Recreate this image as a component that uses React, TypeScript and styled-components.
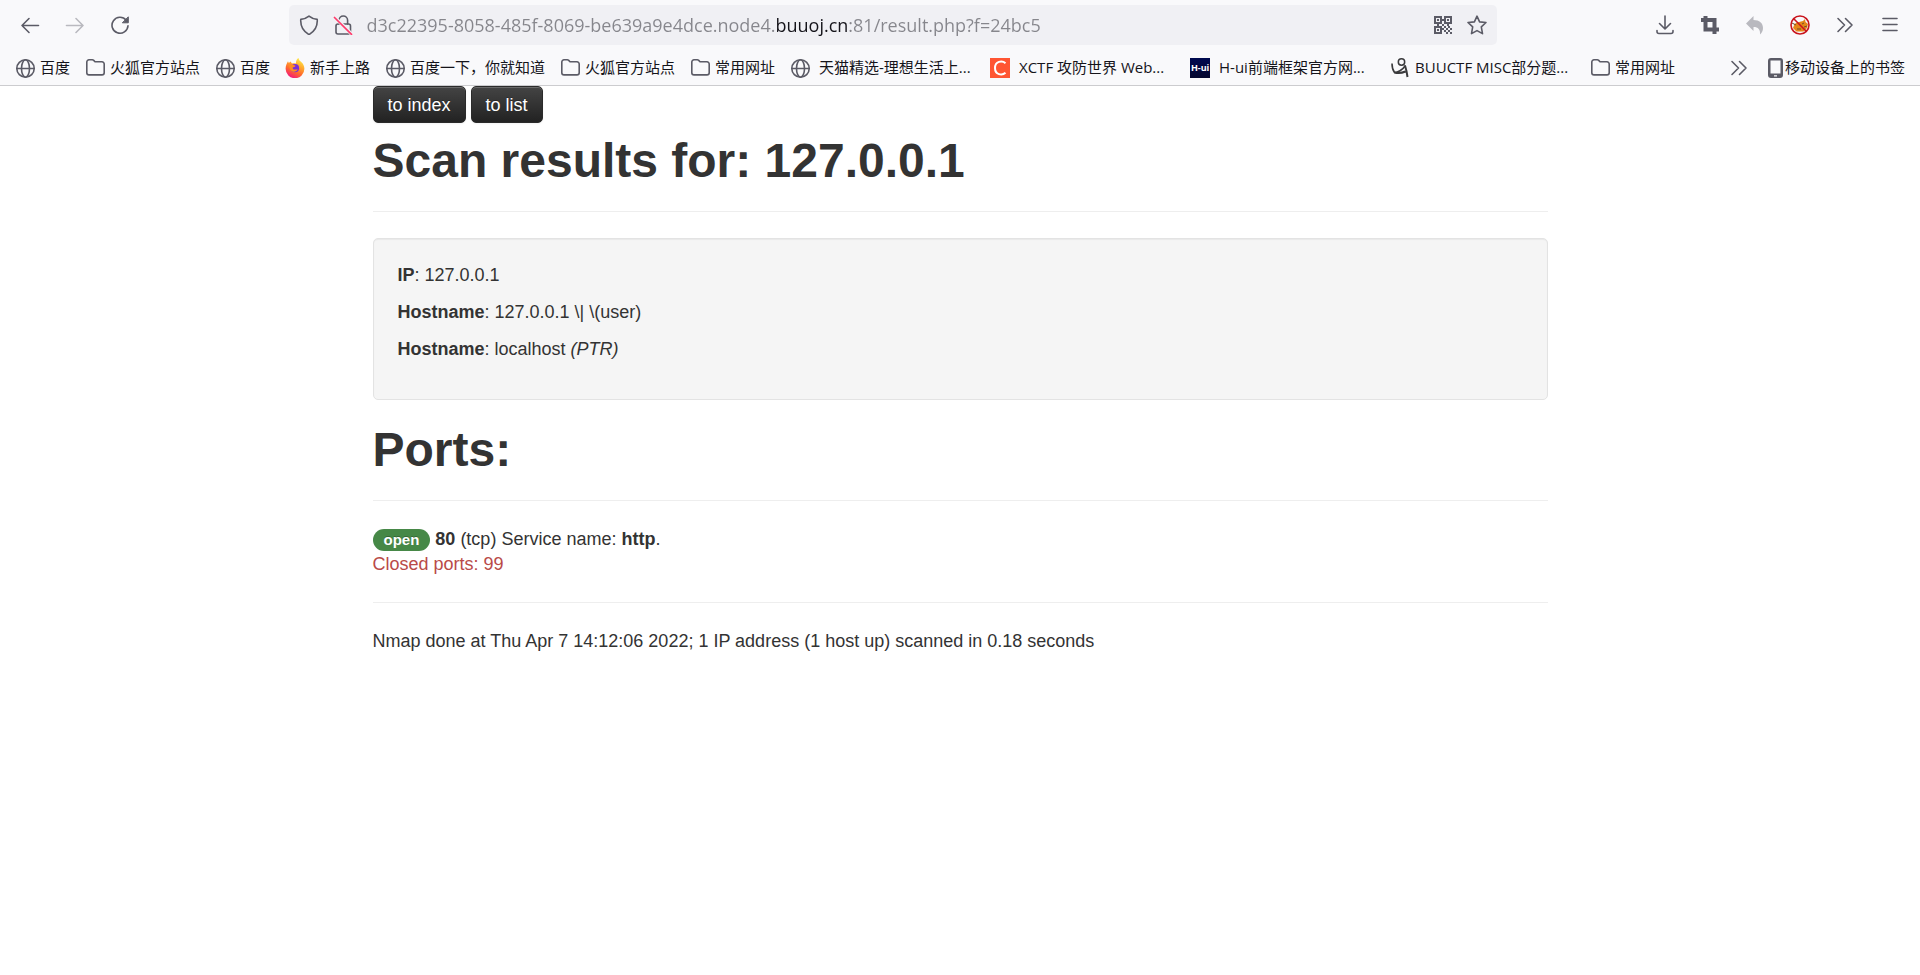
import React from "react";
import styled, { createGlobalStyle } from "styled-components";

const ui = '"Open Sans", "Noto Sans CJK SC", sans-serif';
const ink = "#5b5b66";

const GlobalStyle = createGlobalStyle`
  *, *::before, *::after { box-sizing: border-box; }
  body { margin: 0; background: #fff; color: #333; font: 18px/25px "Liberation Sans", Arial, sans-serif; }
  svg { display: block; flex: none; }
`;

/* Browser chrome */
const Chrome = styled.header`
  background: #f9f9fb;
  border-bottom: 1px solid #cccccf;
  font-family: ${ui};
`;
const NavBar = styled.nav`
  display: flex;
  align-items: center;
  height: 50px;
  padding: 0 10px;
`;
const ToolGroup = styled.div`
  display: flex;
  gap: 5px;
`;
const ToolButton = styled.button<{ $faded?: boolean }>`
  display: grid;
  place-items: center;
  width: 40px;
  height: 40px;
  padding: 0;
  border: 0;
  border-radius: 5px;
  background: none;
  color: ${ink};
  opacity: ${(p) => (p.$faded ? 0.4 : 1)};
`;
const Spring = styled.div`
  flex: 1 1 0;
`;
const UrlBar = styled.div`
  display: flex;
  align-items: center;
  flex: 8 1 0;
  min-width: 0;
  height: 40px;
  padding: 0 10px;
  gap: 14px;
  border-radius: 5px;
  background: #f0f0f4;
  color: ${ink};
`;
const UrlInput = styled.input`
  flex: 1;
  min-width: 0;
  height: 30px;
  padding: 0;
  border: 0;
  outline: 0;
  font: 18px/30px ${ui};
  color: transparent;
  background: linear-gradient(to right, #86868c 409px, #15141a 409px, #15141a 480px, #86868c 480px);
  background-clip: text;
  -webkit-background-clip: text;
`;
const IconButton = styled.button`
  padding: 0;
  border: 0;
  background: none;
  color: inherit;
`;
const Bookmarks = styled.nav`
  display: flex;
  align-items: center;
  height: 35px;
  padding: 0 15px;
`;
const Bookmark = styled.a<{ $wide?: boolean }>`
  display: flex;
  align-items: center;
  gap: 5px;
  flex: none;
  width: ${(p) => (p.$wide ? "200px" : "auto")};
  padding-right: 15px;
  color: #15141a;
  font-size: 15px;
  line-height: 20px;
  white-space: pre;
  text-decoration: none;
  svg { color: ${ink}; }
`;
const BookmarkLabel = styled.span`
  padding-bottom: 2px;
`;
const BookmarkEnd = styled.div`
  display: flex;
  align-items: center;
  margin-left: auto;
  gap: 8px;
`;
const MobileBookmarks = styled(Bookmark)`
  gap: 0;
  padding-right: 0;
`;

/* Scan report */
const Report = styled.main`
  width: 100%;
  max-width: 1175px;
  margin: 0 auto;
`;
const Actions = styled.div`
  display: flex;
  gap: 5px;
`;
const DarkButton = styled.a`
  padding: 6px 14px 4px;
  border: 1px solid #2b2b2b;
  border-radius: 5px;
  background: linear-gradient(#444, #222);
  box-shadow: inset 0 1px 0 rgba(255, 255, 255, 0.2), 0 1px 2px rgba(0, 0, 0, 0.05);
  color: #fff;
  text-decoration: none;
  text-shadow: 0 -1px 0 rgba(0, 0, 0, 0.25);
`;
const Title = styled.h1`
  margin: 13px 0;
  font-size: 48px;
  line-height: 50px;
`;
const Rule = styled.hr`
  height: 1px;
  margin: 25px 0 26px;
  border: 0;
  background: #eee;
`;
const Well = styled.section`
  padding: 24px 24px 25px;
  margin-bottom: 25px;
  border: 1px solid #e3e3e3;
  border-radius: 5px;
  background: #f5f5f5;
  box-shadow: inset 0 1px 1px rgba(0, 0, 0, 0.05);
`;
const Line = styled.p`
  margin: 0 0 12px;
`;
const Port = styled.div`
  display: flex;
  align-items: center;
  gap: 5px;
`;
const Badge = styled.span`
  padding: 2px 11px;
  border-radius: 11px;
  background: #468847;
  color: #fff;
  font-size: 15px;
  font-weight: 700;
  line-height: 18px;
  text-shadow: 0 -1px 0 rgba(0, 0, 0, 0.25);
`;
const Closed = styled.div`
  color: #b94a48;
`;

const Stroke = ({ children, size = 20, width = 1.6 }: { children: React.ReactNode; size?: number; width?: number }) => (
  <svg width={size} height={size} viewBox="0 0 20 20" fill="none" stroke="currentColor" strokeWidth={width} strokeLinecap="round" strokeLinejoin="round" aria-hidden="true">
    {children}
  </svg>
);
const Back = () => <Stroke><path d="M18.5 10.5H2M9 3.5 2 10.5l7 7" /></Stroke>;
const Forward = () => <Stroke><path d="M1.5 10.5H18M11 3.5l7 7-7 7" /></Stroke>;
const Reload = () => (
  <Stroke>
    <path d="M16.2 5.2A8 8 0 1 0 18 10.8" />
    <path d="M18.3 2.2v5.6h-5.6z" fill="currentColor" strokeWidth="1" />
  </Stroke>
);
const Shield = () => <Stroke><path d="M10 1.2C12.2 3 15 4.2 18.2 4.4c.5 6.400-2 11.600-8.200 15.200C3.800 16 1.300 10.800 1.800 4.400 5 4.200 7.800 3 10 1.200z" /></Stroke>;
const Insecure = () => (
  <Stroke>
    <path d="M6 9V5.300a4.300 4.300 0 0 1 8.600 0V9" />
    <rect x="3" y="9" width="14.500" height="10" rx="2" />
    <path d="M2 2.500 18.500 19" stroke="#f0f0f4" strokeWidth="3.500" />
    <path d="M1.500 2.500 18.500 19.300" stroke="#ff3b6b" strokeWidth="1.700" />
  </Stroke>
);
const Star = () => <Stroke><path d="m10 1.200 2.600 5.700 6.400.6-4.700 4.400 1.200 6.700L10 15.600l-5.500 3 1.200-6.700L1 7.500l6.400-.6z" /></Stroke>;
const Qr = () => (
  <svg width="20" height="20" viewBox="0 0 20 20" fill="currentColor" shapeRendering="crispEdges" aria-hidden="true">
    <path fillRule="evenodd" d="M1 1h8v8H1zM3 3v4h4V3zM11 1h8v8h-8zM13 3v4h4V3zM1 11h8v8H1zM3 13v4h4v-4z" />
    <path d="M4 4h2v2H4zM14 4h2v2h-2zM4 14h2v2H4zM9 4h2v2H9zM4 9h2v2H4zM9 9h2v2H9zM14 9h2v2h-2zM11 11h2v2h-2zM15 11h2v2h-2zM13 13h2v2h-2zM17 13h2v2h-2zM11 15h2v2h-2zM15 15h2v2h-2zM13 17h2v2h-2zM17 17h2v2h-2zM9 13h2v2H9z" />
  </svg>
);
const Download = () => <Stroke><path d="M10 1v12.500M4.500 8.500 10 14l5.500-5.500M2 15.500v1c0 1.200.8 2 2 2h12c1.200 0 2-.8 2-2v-1" /></Stroke>;
const Crop = () => (
  <svg width="20" height="20" viewBox="0 0 20 20" fill="none" stroke="currentColor" strokeWidth="4" aria-hidden="true">
    <path d="M5.500 1v13.500H19M1 5h13.500v14" />
  </svg>
);
const Undo = () => (
  <svg width="20" height="20" viewBox="0 0 20 20" fill="currentColor" aria-hidden="true">
    <path d="M8.500 1v4c6 0 9.500 3 9.500 8 0 3-1.200 5-3 6.500.5-5-1.800-7.500-6.500-7.500v4L1 8.500z" />
  </svg>
);
const BlockedCookie = () => (
  <svg width="20" height="20" viewBox="0 0 20 20" aria-hidden="true">
    <path d="M4.500 9 7 7.500l6-1.500 2-2 .5 3L18 9l-1 4-3.500 3.500h-7L3 13z" fill="#e58618" />
    <path d="M2 8l4 2M14 12l3-1M7 14h4M12 9l2-1" stroke="#714c2a" strokeWidth="1" />
    <circle cx="10" cy="10" r="9" fill="none" stroke="#c9141c" strokeWidth="1.600" />
    <path d="m3.500 3.500 13 13" stroke="#c9141c" strokeWidth="1.600" />
  </svg>
);
const Chevrons = () => <Stroke><path d="m3 3.500 6.500 6.500L3 16.500M10.500 3.500l6.500 6.500-6.500 6.500" /></Stroke>;
const Menu = () => <Stroke><path d="M3 3.500h14M3 9.500h14M3 15.500h14" /></Stroke>;
const Globe = () => (
  <Stroke>
    <circle cx="10.500" cy="10.500" r="8.700" />
    <path d="M1.800 10.500h17.400" />
    <ellipse cx="10.500" cy="10.500" rx="4" ry="8.700" />
  </Stroke>
);
const Folder = () => <Stroke><path d="M1.800 4A2.200 2.200 0 0 1 4 1.800h3.300c.6 0 1 .2 1.400.6L10 3.800h7A2.200 2.200 0 0 1 19.200 6v8.700A2.200 2.200 0 0 1 17 16.900H4a2.200 2.200 0 0 1-2.200-2.200z" /></Stroke>;
const Phone = () => (
  <svg width="18" height="20" viewBox="0 0 18 20" aria-hidden="true">
    <path fill="currentColor" fillRule="evenodd" d="M4 0h9a3 3 0 0 1 3 3v14a3 3 0 0 1-3 3H4a3 3 0 0 1-3-3V3a3 3 0 0 1 3-3zM3.500 2.500v13h10v-13zM7 17.200v1.200h3v-1.200z" />
  </svg>
);
const Fox = () => (
  <svg width="20" height="20" viewBox="0 0 20 20" aria-hidden="true">
    <defs>
      <linearGradient id="fox" x1="0.8" y1="0" x2="0.3" y2="1">
        <stop offset="0" stopColor="#fff44f" />
        <stop offset="0.35" stopColor="#ffab2e" />
        <stop offset="0.65" stopColor="#ff6a2c" />
        <stop offset="1" stopColor="#f3127f" />
      </linearGradient>
    </defs>
    <path d="M13.500 0c.3 2 1.500 3 3 4.300 1.800 1.700 2.900 3.900 2.900 6.500A9.400 9.400 0 0 1 .6 10.800C.6 7.500 2 5 3 3.200l.8 1.900L5.500 3.500 7 5.500c1.500-.5 3-.3 4 .1C10.700 3.500 11.700 1 13.500 0z" fill="url(#fox)" />
    <circle cx="10" cy="10.200" r="4.100" fill="#7a2fd8" />
    <path d="M4.500 6.500c2-.8 4 .4 6 1.200-.3 1.300-2 1.500-2.800 1.700-.2 1 .7 2 2 2.200 1.200.1 2-.4 2.800-.2-.6 1.600-3 2.800-5 2-2-.7-3.500-3.500-3-6.900z" fill="#ff8c22" />
  </svg>
);
const LetterC = () => (
  <svg width="20" height="20" viewBox="0 0 20 20" aria-hidden="true">
    <path d="M0 0h20v20H0z" fill="#ff5532" />
    <path d="M15.500 5.200C12 2 5 3.200 5 10s7 8 10.500 4.800" fill="none" stroke="#fff" strokeWidth="2" />
  </svg>
);
const HuiTile = styled.span`
  display: grid;
  place-items: center;
  flex: none;
  width: 20px;
  height: 20px;
  overflow: hidden;
  background: linear-gradient(#000a50, #04062e);
  color: #fff;
  font: 700 9px/20px ${ui};
`;
const Figure = () => (
  <svg width="20" height="20" viewBox="0 0 20 20" fill="none" stroke="#3a3a3c" aria-hidden="true">
    <circle cx="11.500" cy="4" r="3.200" strokeWidth="1.500" />
    <path d="M2 5.500C2 9 2.600 12 4.500 14.500c3 0 8-2.500 11-7" strokeWidth="1.600" />
    <path d="M15 7.500c1 3 1.800 6.500 2.500 11.500M4.500 14.500c3.500 1 7 .8 11-1" strokeWidth="2" />
  </svg>
);

const bookmarks: { icon: React.ReactNode; label: string; wide?: boolean }[] = [
  { icon: <Globe />, label: "百度" },
  { icon: <Folder />, label: "火狐官方站点" },
  { icon: <Globe />, label: "百度" },
  { icon: <Fox />, label: "新手上路" },
  { icon: <Globe />, label: "百度一下，你就知道" },
  { icon: <Folder />, label: "火狐官方站点" },
  { icon: <Folder />, label: "常用网址" },
  { icon: <Globe />, label: " 天猫精选-理想生活上...", wide: true },
  { icon: <LetterC />, label: " XCTF 攻防世界 Web...", wide: true },
  { icon: <HuiTile>H-ui</HuiTile>, label: " H-ui前端框架官方网...", wide: true },
  { icon: <Figure />, label: "BUUCTF MISC部分题...", wide: true },
  { icon: <Folder />, label: "常用网址" },
];

export default function App() {
  return (
    <>
      <GlobalStyle />
      <Chrome>
        <NavBar aria-label="Navigation">
          <ToolGroup>
            <ToolButton aria-label="Back"><Back /></ToolButton>
            <ToolButton aria-label="Forward" $faded><Forward /></ToolButton>
            <ToolButton aria-label="Reload"><Reload /></ToolButton>
          </ToolGroup>
          <Spring />
          <UrlBar>
            <IconButton aria-label="Tracking protection"><Shield /></IconButton>
            <IconButton aria-label="Connection not secure"><Insecure /></IconButton>
            <UrlInput aria-label="Address" defaultValue="d3c22395-8058-485f-8069-be639a9e4dce.node4.buuoj.cn:81/result.php?f=24bc5" />
            <IconButton aria-label="QR code"><Qr /></IconButton>
            <IconButton aria-label="Bookmark this page"><Star /></IconButton>
          </UrlBar>
          <Spring />
          <ToolGroup>
            <ToolButton aria-label="Downloads"><Download /></ToolButton>
            <ToolButton aria-label="Screenshot"><Crop /></ToolButton>
            <ToolButton aria-label="Undo" $faded><Undo /></ToolButton>
            <ToolButton aria-label="Cookie blocker"><BlockedCookie /></ToolButton>
            <ToolButton aria-label="More tools"><Chevrons /></ToolButton>
            <ToolButton aria-label="Menu"><Menu /></ToolButton>
          </ToolGroup>
        </NavBar>
        <Bookmarks aria-label="Bookmarks">
          {bookmarks.map((b, i) => (
            <Bookmark key={i} href="#" $wide={b.wide}>
              {b.icon}
              <BookmarkLabel>{b.label}</BookmarkLabel>
            </Bookmark>
          ))}
          <BookmarkEnd>
            <ToolButton aria-label="More bookmarks"><Chevrons /></ToolButton>
            <MobileBookmarks href="#"><Phone /><BookmarkLabel>移动设备上的书签</BookmarkLabel></MobileBookmarks>
          </BookmarkEnd>
        </Bookmarks>
      </Chrome>
      <Report>
        <Actions>
          <DarkButton href="#">to index</DarkButton>
          <DarkButton href="#">to list</DarkButton>
        </Actions>
        <Title>Scan results for: 127.0.0.1</Title>
        <Rule />
        <Well>
          <Line><strong>IP</strong>: 127.0.0.1</Line>
          <Line><strong>Hostname</strong>: 127.0.0.1 \| \(user)</Line>
          <Line><strong>Hostname</strong>: localhost <em>(PTR)</em></Line>
        </Well>
        <Title>Ports:</Title>
        <Rule />
        <Port>
          <Badge>open</Badge>
          <span><strong>80</strong> (tcp) Service name: <strong>http</strong>.</span>
        </Port>
        <Closed>Closed ports: 99</Closed>
        <Rule />
        <div>Nmap done at Thu Apr 7 14:12:06 2022; 1 IP address (1 host up) scanned in 0.18 seconds</div>
      </Report>
    </>
  );
}
